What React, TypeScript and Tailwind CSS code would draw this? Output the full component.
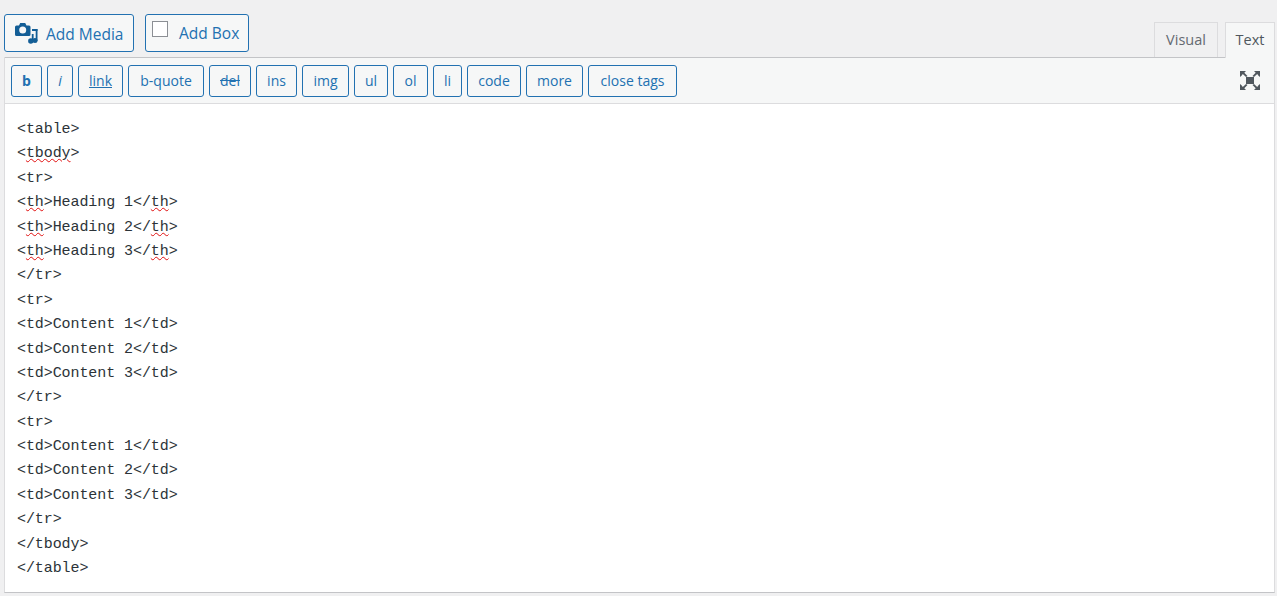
const tools = [
  { label: "b", width: "w-[31px]", extra: "font-bold" },
  { label: "i", width: "w-[26px]", extra: "italic" },
  { label: "link", width: "w-[45px]", extra: "underline" },
  { label: "b-quote", width: "w-[76px]", extra: "" },
  { label: "del", width: "w-[42px]", extra: "line-through" },
  { label: "ins", width: "w-[41px]", extra: "" },
  { label: "img", width: "w-[47px]", extra: "" },
  { label: "ul", width: "w-[34px]", extra: "" },
  { label: "ol", width: "w-[35px]", extra: "" },
  { label: "li", width: "w-[29px]", extra: "" },
  { label: "code", width: "w-[54px]", extra: "" },
  { label: "more", width: "w-[57px]", extra: "" },
  { label: "close tags", width: "w-[89px]", extra: "" },
];

const cells = ["Content 1", "Content 2", "Content 3"];

function Typo({ children }: { children: string }) {
  return (
    <span className="underline decoration-wavy decoration-[#e01010] decoration-1 underline-offset-[1px]">
      {children}
    </span>
  );
}

function MediaIcon() {
  return (
    <svg width="23" height="22" viewBox="0 0 23 22" fill="#135e96">
      <path
        fillRule="evenodd"
        d="M1.500 3.500H4L5.200 1h5l1.300 2.500H14a1.500 1.500 0 0 1 1.500 1.500v7.500A1.500 1.500 0 0 1 14 14H1.500A1.500 1.500 0 0 1 0 12.500V5a1.500 1.500 0 0 1 1.500-1.500Zm6.200 1a3.500 3.500 0 1 0 0 7 3.500 3.500 0 0 0 0-7Z"
      />
      <rect x="17" y="7" width="5.500" height="2" />
      <rect x="20.700" y="7" width="1.800" height="12" />
      <rect x="16.800" y="12" width="1.800" height="7" />
      <circle cx="15.800" cy="19" r="2.700" />
      <circle cx="20" cy="18.500" r="2.500" />
    </svg>
  );
}

function ExpandIcon() {
  return (
    <svg width="20" height="19" viewBox="0 0 20 19" fill="#50575e">
      <rect x="6" y="6" width="8" height="7" />
      <path d="M0 0h6L4.300 1.700 7.500 5 6 6 2.800 3 1.500 4.800 0 6ZM20 0h-6l1.700 1.700L12.500 5 14 6l3.200-3 1.300 1.800L20 6ZM0 19h6l-1.700-1.700L7.500 14 6 13l-3.200 3-1.300-1.800L0 13ZM20 19h-6l1.700-1.700L12.500 14 14 13l3.200 3 1.300-1.800L20 13Z" />
    </svg>
  );
}

export default function App() {
  return (
    <div className="h-[596px] overflow-hidden bg-[#f0f0f1] pl-1 pr-[2px] pt-[14px] font-['Open_Sans',sans-serif] text-[14px] text-[#2271b1]">
      <div className="flex h-[43px] justify-between">
        <div className="flex items-start gap-[11px] text-[15.5px]">
          <button className="flex h-[38px] w-[130px] items-center rounded-[3px] border border-[#2271b1] bg-[#f6f7f7] pl-[10px]">
            <MediaIcon />
            <span className="ml-2 pt-1">Add Media</span>
          </button>
          <button className="relative h-[38px] w-[104px] rounded-[3px] border border-[#2271b1] bg-[#f6f7f7] pl-[33px] pt-[2px] text-left">
            <span className="absolute left-[6px] top-[6px] h-4 w-4 border border-[#8c8f94] bg-white" />
            Add Box
          </button>
        </div>
        <div className="flex items-end gap-[7px] text-[14.500px] text-[#50575e]">
          <div className="flex h-[35px] w-[64px] items-center justify-center border border-b-0 border-[#dcdcde] bg-[#f0f0f1] text-[#646970]">
            Visual
          </div>
          <div className="relative z-10 -mb-px flex h-[36px] w-[50px] items-center justify-center border border-b-0 border-[#dcdcde] bg-[#f6f7f7] pb-[2px]">
            Text
          </div>
        </div>
      </div>
      <div className="border border-t-0 border-[#c3c4c7] border-l-[#dcdcde] border-r-[#dcdcde]">
        <div className="flex h-[47px] items-center justify-between border-y border-t-[#c3c4c7] border-b-[#dcdcde] bg-[#f6f7f7] pl-[6px] pr-[14px]">
          <div className="flex gap-[5px]">
            {tools.map((tool) => (
              <button
                key={tool.label}
                className={`h-[32px] rounded-[3px] border border-[#2271b1] bg-[#f6f7f7] text-center ${tool.width} ${tool.extra}`}
              >
                {tool.label}
              </button>
            ))}
          </div>
          <ExpandIcon />
        </div>
        <div className="h-[488px] bg-white pl-3 pt-[14px] font-['Liberation_Mono',monospace] text-[15px] leading-[24.39px] tracking-[-0.08px] text-[#2c3338]">
          <div>&lt;table&gt;</div>
          <div>&lt;<Typo>tbody</Typo>&gt;</div>
          <div>&lt;tr&gt;</div>
          {["Heading 1", "Heading 2", "Heading 3"].map((heading) => (
            <div key={heading}>
              &lt;<Typo>th</Typo>&gt;{heading}&lt;/<Typo>th</Typo>&gt;
            </div>
          ))}
          <div>&lt;/tr&gt;</div>
          <div>&lt;tr&gt;</div>
          {cells.map((cell) => (
            <div key={cell}>&lt;td&gt;{cell}&lt;/td&gt;</div>
          ))}
          <div>&lt;/tr&gt;</div>
          <div>&lt;tr&gt;</div>
          {cells.map((cell) => (
            <div key={cell}>&lt;td&gt;{cell}&lt;/td&gt;</div>
          ))}
          <div>&lt;/tr&gt;</div>
          <div>&lt;/tbody&gt;</div>
          <div>&lt;/table&gt;</div>
        </div>
      </div>
    </div>
  );
}
